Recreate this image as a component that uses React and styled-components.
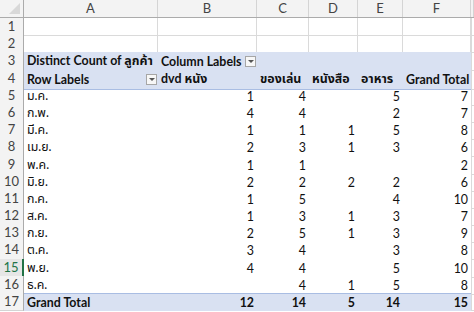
import styled, { createGlobalStyle } from "styled-components";

const GlobalStyle = createGlobalStyle`
  body {
    margin: 0;
    background: #ffffff;
  }
`;

const COLS = "24px 134px 99px 52px 49px 45px 68px 1fr";
const BAND = "#d9e1f2";
const BAND_LINE = "#a9bde3";
const GRID = "#dadada";

const Sheet = styled.div`
  width: 474px;
  height: 312px;
  overflow: hidden;
  font-family: Lato, "Noto Sans", "Noto Sans Thai", sans-serif;
  font-size: 12.4px;
  color: #111;
`;

const HeaderRow = styled.div`
  display: grid;
  grid-template-columns: ${COLS};
  height: 18px;
  box-sizing: border-box;
  background: #f3f3f3;
  border-bottom: 1px solid #ababab;
`;

const ColHead = styled.div`
  box-sizing: border-box;
  border-right: 1px solid #d4d4d4;
  color: #444;
  text-align: center;
  line-height: 17px;
  font-size: 13px;
`;

const Corner = styled.div`
  position: relative;
  box-sizing: border-box;
  border-right: 1px solid #ababab;

  &::after {
    content: "";
    position: absolute;
    right: 3px;
    bottom: 3px;
    border-left: 11px solid transparent;
    border-bottom: 11px solid #d8d8d8;
  }
`;

const Row = styled.div`
  display: grid;
  grid-template-columns: ${COLS};
  height: 17.2px;
`;

const RowHead = styled.div`
  box-sizing: border-box;
  background: ${(p) => (p.$active ? "#e6e6e6" : "#f3f3f3")};
  color: ${(p) => (p.$active ? "#217346" : "#444")};
  border-right: ${(p) => (p.$active ? "2px solid #217346" : "1px solid #ababab")};
  border-bottom: 1px solid #d4d4d4;
  text-align: center;
  line-height: 17px;
  font-size: 13px;
`;

const Cell = styled.div`
  box-sizing: border-box;
  display: flex;
  align-items: center;
  justify-content: ${(p) =>
    p.$split ? "space-between" : p.$right ? "flex-end" : "flex-start"};
  padding: 0 3px 0 3px;
  padding-right: ${(p) => (p.$split ? "1px" : "3px")};
  white-space: nowrap;
  overflow: visible;
  font-weight: ${(p) => (p.$bold ? 700 : 400)};
  background: ${(p) => (p.$band ? BAND : "transparent")};
  border-right: ${(p) => (p.$grid ? `1px solid ${GRID}` : "none")};
  border-bottom: ${(p) =>
    p.$grid ? `1px solid ${GRID}` : p.$under ? `1px solid ${BAND_LINE}` : "none"};
  border-top: ${(p) => (p.$over ? `1px solid ${BAND_LINE}` : "none")};
`;

const Spare = styled.div`
  box-sizing: border-box;
  border-left: 1px solid ${GRID};
  border-bottom: 1px solid ${GRID};
`;

const FilterButton = styled.span`
  flex: none;
  position: relative;
  width: 11px;
  height: 11px;
  box-sizing: border-box;
  border: 1px solid #a6a6a6;
  background: #f7f7f7;

  &::after {
    content: "";
    position: absolute;
    left: 2px;
    top: 3px;
    border-left: 3px solid transparent;
    border-right: 3px solid transparent;
    border-top: 3px solid #555;
  }
`;

const months = [
  ["ม.ค.", 1, 4, null, 5, 7],
  ["ก.พ.", 4, 4, null, 2, 7],
  ["มี.ค.", 1, 1, 1, 5, 8],
  ["เม.ย.", 2, 3, 1, 3, 6],
  ["พ.ค.", 1, 1, null, null, 2],
  ["มิ.ย.", 2, 2, 2, 2, 6],
  ["ก.ค.", 1, 5, null, 4, 10],
  ["ส.ค.", 1, 3, 1, 3, 7],
  ["ก.ย.", 2, 5, 1, 3, 9],
  ["ต.ค.", 3, 4, null, 3, 8],
  ["พ.ย.", 4, 4, null, 5, 10],
  ["ธ.ค.", null, 4, 1, 5, 8],
];

const totals = [12, 14, 5, 14, 15];
const products = ["dvd หนัง", "ของเล่น", "หนังสือ", "อาหาร", "Grand Total"];

export default function App() {
  return (
    <Sheet>
      <GlobalStyle />
      <HeaderRow>
        <Corner />
        {["A", "B", "C", "D", "E", "F", ""].map((c) => (
          <ColHead key={c}>{c}</ColHead>
        ))}
      </HeaderRow>

      {[1, 2].map((n) => (
        <Row key={n}>
          <RowHead>{n}</RowHead>
          {[0, 1, 2, 3, 4, 5].map((i) => (
            <Cell key={i} $grid />
          ))}
          <Spare />
        </Row>
      ))}

      <Row>
        <RowHead>3</RowHead>
        <Cell $band $bold>Distinct Count of ลูกค้า</Cell>
        <Cell $band $bold $split>
          Column Labels
          <FilterButton />
        </Cell>
        <Cell $band />
        <Cell $band />
        <Cell $band />
        <Cell $band />
        <Spare />
      </Row>

      <Row>
        <RowHead>4</RowHead>
        <Cell $band $bold $split $under>
          Row Labels
          <FilterButton />
        </Cell>
        {products.map((p) => (
          <Cell key={p} $band $bold $under>
            {p}
          </Cell>
        ))}
        <Spare />
      </Row>

      {months.map(([label, ...vals], i) => (
        <Row key={label}>
          <RowHead $active={i + 5 === 15}>{i + 5}</RowHead>
          <Cell>{label}</Cell>
          {vals.map((v, j) => (
            <Cell key={j} $right>
              {v}
            </Cell>
          ))}
          <Spare />
        </Row>
      ))}

      <Row>
        <RowHead>17</RowHead>
        <Cell $band $bold $over>Grand Total</Cell>
        {totals.map((v, j) => (
          <Cell key={j} $band $bold $over $right>
            {v}
          </Cell>
        ))}
        <Spare />
      </Row>
    </Sheet>
  );
}
